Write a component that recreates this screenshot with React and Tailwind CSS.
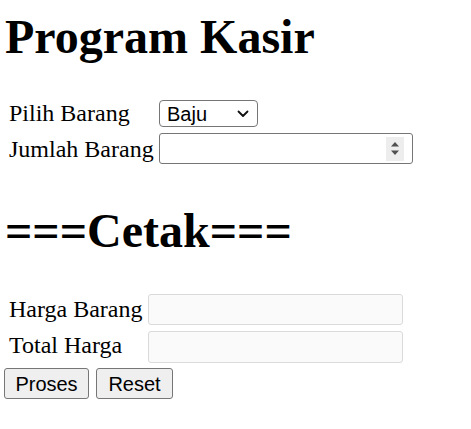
import React from "react";

const serif = "font-['Liberation_Serif',serif]";
const sans = "font-['Liberation_Sans',Arial,sans-serif]";

function Chevron() {
  return (
    <svg width="12" height="8" viewBox="0 0 12 8" className="shrink-0">
      <path d="M1.5 1.5 L6 6 L10.5 1.5" fill="none" stroke="#111" strokeWidth="1.8" strokeLinecap="round" strokeLinejoin="round" />
    </svg>
  );
}

function Spinner() {
  return (
    <div className="flex h-[24px] w-[18px] flex-col items-center justify-center gap-[3px] bg-[#ededed]">
      <svg width="10" height="6" viewBox="0 0 10 6">
        <path d="M1 5.5 L5 1 L9 5.5 Z" fill="#505050" />
      </svg>
      <svg width="10" height="6" viewBox="0 0 10 6">
        <path d="M1 0.5 L5 5 L9 0.5 Z" fill="#505050" />
      </svg>
    </div>
  );
}

export default function App() {
  return (
    <div className={`${serif} h-[429px] w-[471px] bg-white text-black`}>
      <h1 className="ml-[5px] pt-[10px] text-[48px] font-bold leading-[53px]">Program Kasir</h1>

      {/* item selection */}
      <div className="mt-[37px] flex flex-col gap-[6px] pl-[9px]">
        <div className="flex h-[27px] items-start">
          <span className="w-[150px] text-[24px] leading-[27px]">Pilih Barang</span>
          <div className={`${sans} flex h-[27px] w-[99px] items-center justify-between rounded-[4px] border border-[#767676] pl-[7px] pr-[8px] text-[20px]`}>
            <span className="leading-none">Baju</span>
            <Chevron />
          </div>
        </div>
        <div className="flex h-[31px] items-start">
          <span className="w-[150px] pt-[3px] text-[24px] leading-[27px]">Jumlah Barang</span>
          <div className="flex h-[31px] w-[254px] items-center justify-end rounded-[3px] border border-[#767676] pr-[8px]">
            <Spinner />
          </div>
        </div>
      </div>

      <h1 className="ml-[5px] mt-[40px] text-[48px] font-bold leading-[53px]">===Cetak===</h1>

      {/* totals */}
      <div className="mt-[37px] flex flex-col gap-[6px] pl-[9px]">
        <div className="flex h-[31px] items-start">
          <span className="w-[139px] pt-[2px] text-[24px] leading-[27px]">Harga Barang</span>
          <div className="h-[31px] w-[255px] rounded-[3px] border border-[#dadada] bg-[#fafafa]" />
        </div>
        <div className="flex h-[32px] items-start">
          <span className="w-[139px] pt-[1px] text-[24px] leading-[27px]">Total Harga</span>
          <div className="h-[32px] w-[255px] rounded-[3px] border border-[#dadada] bg-[#fafafa]" />
        </div>
      </div>

      <div className={`${sans} ml-[4px] mt-[5px] flex gap-[7px] text-[20px]`}>
        <button className="flex h-[31px] w-[85px] items-center justify-center rounded-[3px] border border-[#767676] bg-[#efefef] leading-none">Proses</button>
        <button className="flex h-[31px] w-[77px] items-center justify-center rounded-[3px] border border-[#767676] bg-[#efefef] leading-none">Reset</button>
      </div>
    </div>
  );
}
